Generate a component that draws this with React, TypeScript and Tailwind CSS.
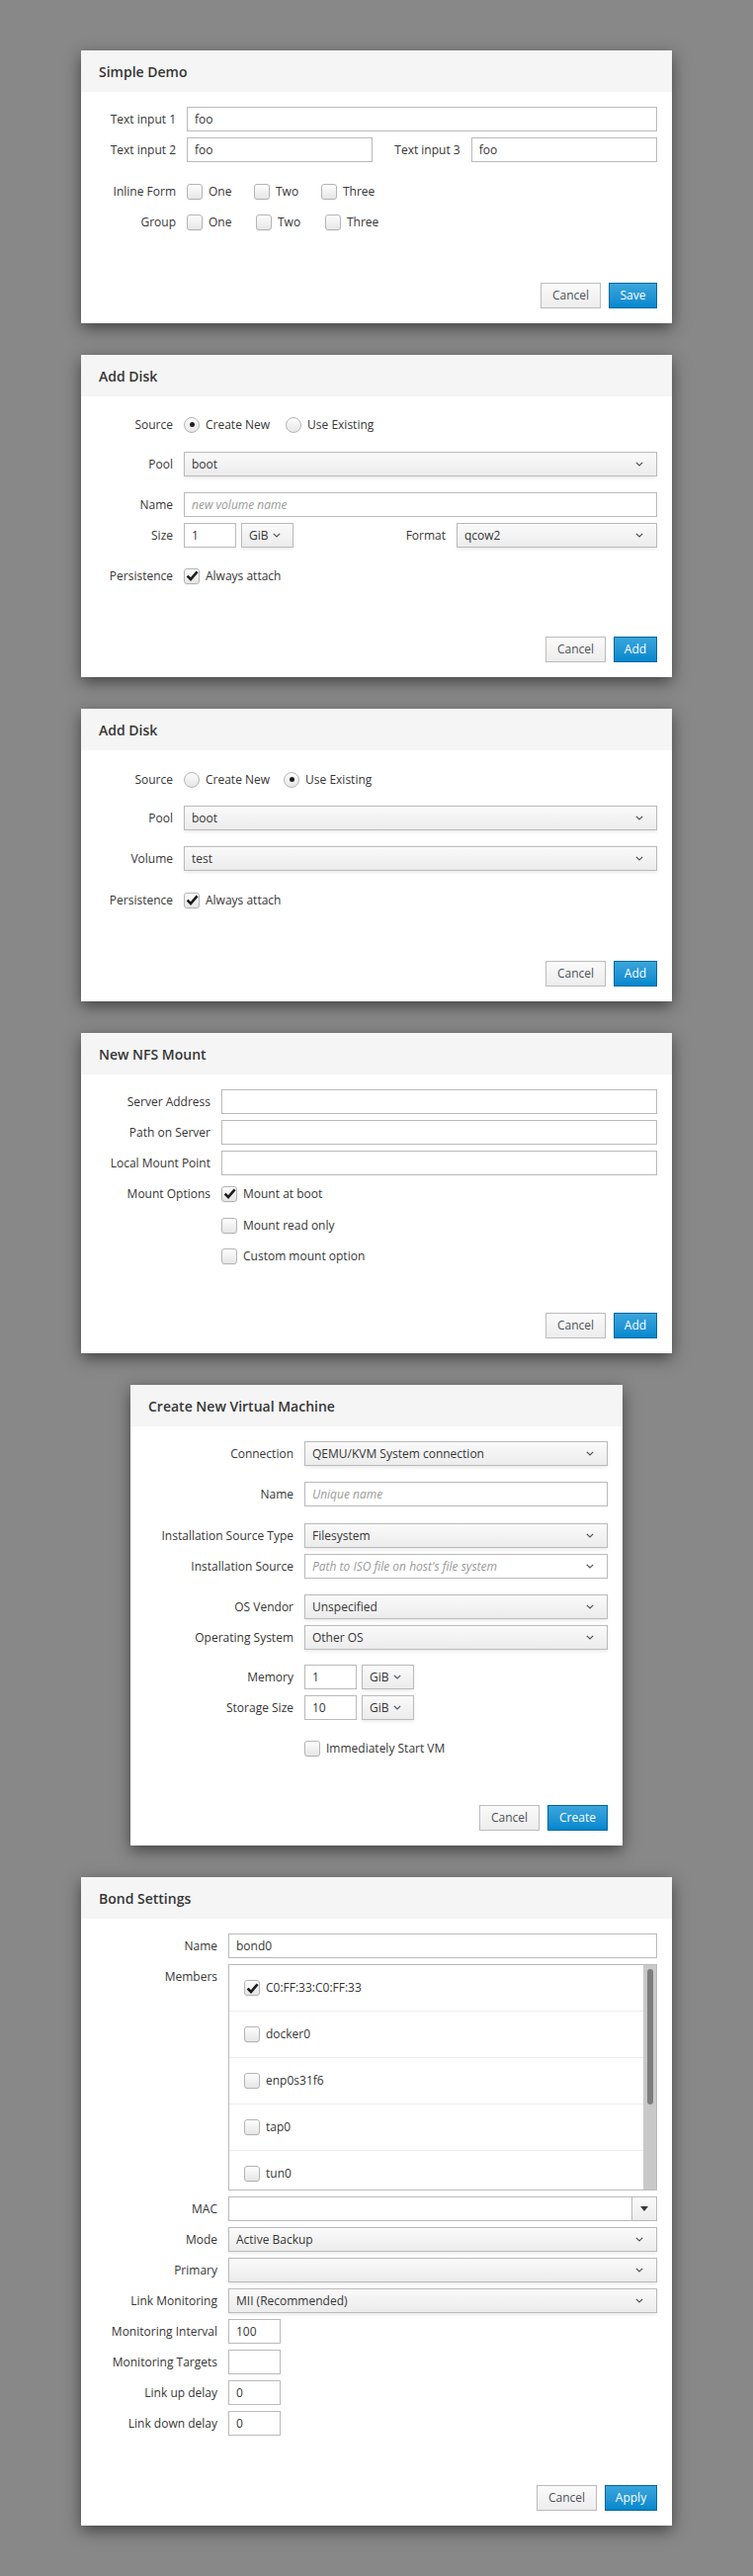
import type { ReactNode } from 'react'
import clsx from 'clsx'

const Chevron = () => (
  <svg width="8" height="5" viewBox="0 0 8 5" className="shrink-0">
    <path d="M0.8 0.8 L4 4 L7.2 0.8" fill="none" stroke="#4d5258" strokeWidth="1.2" />
  </svg>
)

const Checkbox = ({ checked }: { checked?: boolean }) => (
  <span className="flex size-[16px] shrink-0 items-center justify-center rounded-[3px] border border-[#b4b4b4] bg-linear-to-b from-[#fdfdfd] to-[#e6e6e6] shadow-[0_1px_1px_rgba(0,0,0,0.06)]">
    {checked && (
      <svg width="13" height="11" viewBox="0 0 13 11">
        <path d="M1.6 5.6 L5 9 L11.6 1.4" fill="none" stroke="#1e1e1e" strokeWidth="2.6" />
      </svg>
    )}
  </span>
)

const Radio = ({ checked }: { checked?: boolean }) => (
  <span className="flex size-[16px] shrink-0 items-center justify-center rounded-full border border-[#b4b4b4] bg-linear-to-b from-[#fdfdfd] to-[#e6e6e6]">
    {checked && <span className="size-[5px] rounded-full bg-[#1e1e1e]" />}
  </span>
)

const Check = ({ label, checked, className }: { label: string; checked?: boolean; className?: string }) => (
  <div className={clsx('flex items-center gap-[6px]', className)}>
    <Checkbox checked={checked} />
    <span>{label}</span>
  </div>
)

const Input = ({ value, placeholder, className }: { value?: string; placeholder?: string; className?: string }) => (
  <input
    readOnly
    value={value ?? ''}
    placeholder={placeholder}
    className={clsx(
      'h-[25px] min-w-0 border border-[#bababa] bg-white px-[7px] text-[#363636] outline-none placeholder:italic placeholder:text-[#9a9a9a]',
      className,
    )}
  />
)

const Select = ({ value, placeholder, plain, className }: { value?: string; placeholder?: string; plain?: boolean; className?: string }) => (
  <div
    className={clsx(
      'flex h-[25px] items-center justify-between border border-[#bababa] pr-[13px] pl-[7px]',
      plain ? 'bg-white' : 'bg-linear-to-b from-[#fafafa] to-[#ececec] shadow-[0_2px_3px_rgba(3,3,3,0.08)]',
      className,
    )}
  >
    {value ? <span>{value}</span> : <span className="italic text-[#9a9a9a]">{placeholder}</span>}
    <Chevron />
  </div>
)

const Unit = () => (
  <div className="flex h-[25px] w-[53px] items-center gap-[4px] border border-[#bababa] bg-linear-to-b from-[#fafafa] to-[#ececec] pl-[7px] shadow-[0_2px_3px_rgba(3,3,3,0.08)]">
    <span>GiB</span>
    <Chevron />
  </div>
)

const Row = ({ label, labelW, mt, top, children }: { label?: string; labelW: string; mt?: string; top?: boolean; children: ReactNode }) => (
  <div className={clsx('flex', top ? 'items-start' : 'items-center', mt)}>
    <div className={clsx('flex h-[25px] shrink-0 items-center justify-end whitespace-nowrap', labelW)}>{label}</div>
    <div className="ml-[11px] flex min-h-[25px] min-w-0 flex-1 items-center">{children}</div>
  </div>
)

const Button = ({ children, primary, width }: { children: ReactNode; primary?: boolean; width: string }) => (
  <button
    className={clsx(
      'h-[26px] border text-center leading-none',
      width,
      primary
        ? 'border-[#00659c] bg-linear-to-b from-[#39a5dc] to-[#0088ce] text-white'
        : 'border-[#bbbbbb] bg-linear-to-b from-[#fafafa] to-[#ededed] text-[#4d5258]',
    )}
  >
    {children}
  </button>
)

const Modal = ({
  title,
  wide = true,
  children,
  action,
  actionW,
  footerMt,
}: {
  title: string
  wide?: boolean
  children: ReactNode
  action: string
  actionW: string
  footerMt: string
}) => (
  <section className={clsx('bg-white shadow-[0_5px_15px_rgba(0,0,0,0.5)]', wide ? 'w-[598px]' : 'w-[498px]')}>
    <header className="flex h-[42px] items-center bg-[#f5f5f5] pl-[18px] text-[14px] font-semibold text-[#363636]">{title}</header>
    <div className="pt-[15px] pr-[15px] pl-[27px]">{children}</div>
    <footer className={clsx('flex justify-end gap-[8px] pr-[15px] pb-[15px]', footerMt)}>
      <Button width="w-[61px]">Cancel</Button>
      <Button primary width={actionW}>
        {action}
      </Button>
    </footer>
  </section>
)

const members = ['C0:FF:33:C0:FF:33', 'docker0', 'enp0s31f6', 'tap0', 'tun0']

export default function App() {
  return (
    <div className="flex min-h-screen flex-col items-center gap-[32px] bg-[#888888] py-[51px] font-['Open_Sans',sans-serif] text-[12px] text-[#363636]">
      <Modal title="Simple Demo" action="Save" actionW="w-[49px]" footerMt="mt-[49px]">
        <Row label="Text input 1" labelW="w-[69px]">
          <Input value="foo" className="flex-1" />
        </Row>
        <Row label="Text input 2" labelW="w-[69px]" mt="mt-[6px]">
          <Input value="foo" className="flex-1" />
          <span className="mr-[11px] ml-[22px] whitespace-nowrap">Text input 3</span>
          <Input value="foo" className="flex-1" />
        </Row>
        <Row label="Inline Form" labelW="w-[69px]" mt="mt-[17px]">
          <Check label="One" className="w-[68px]" />
          <Check label="Two" className="w-[68px]" />
          <Check label="Three" />
        </Row>
        <Row label="Group" labelW="w-[69px]" mt="mt-[6px]">
          <Check label="One" className="w-[70px]" />
          <Check label="Two" className="w-[70px]" />
          <Check label="Three" />
        </Row>
      </Modal>

      <Modal title="Add Disk" action="Add" actionW="w-[44px]" footerMt="mt-[49px]">
        <Row label="Source" labelW="w-[66px]" mt="mt-[1px]">
          <div className="flex items-center gap-[6px]">
            <Radio checked />
            <span>Create New</span>
          </div>
          <div className="ml-[16px] flex items-center gap-[6px]">
            <Radio />
            <span>Use Existing</span>
          </div>
        </Row>
        <Row label="Pool" labelW="w-[66px]" mt="mt-[15px]">
          <Select value="boot" className="flex-1" />
        </Row>
        <Row label="Name" labelW="w-[66px]" mt="mt-[16px]">
          <Input placeholder="new volume name" className="flex-1" />
        </Row>
        <Row label="Size" labelW="w-[66px]" mt="mt-[6px]">
          <Input value="1" className="w-[53px]" />
          <div className="ml-[5px]">
            <Unit />
          </div>
          <span className="mr-[11px] ml-auto">Format</span>
          <Select value="qcow2" className="w-[203px]" />
        </Row>
        <Row label="Persistence" labelW="w-[66px]" mt="mt-[16px]">
          <Check label="Always attach" checked />
        </Row>
      </Modal>

      <Modal title="Add Disk" action="Add" actionW="w-[44px]" footerMt="mt-[49px]">
        <Row label="Source" labelW="w-[66px]" mt="mt-[2px]">
          <div className="flex items-center gap-[6px]">
            <Radio />
            <span>Create New</span>
          </div>
          <div className="ml-[14px] flex items-center gap-[6px]">
            <Radio checked />
            <span>Use Existing</span>
          </div>
        </Row>
        <Row label="Pool" labelW="w-[66px]" mt="mt-[14px]">
          <Select value="boot" className="flex-1" />
        </Row>
        <Row label="Volume" labelW="w-[66px]" mt="mt-[16px]">
          <Select value="test" className="flex-1" />
        </Row>
        <Row label="Persistence" labelW="w-[66px]" mt="mt-[17px]">
          <Check label="Always attach" checked />
        </Row>
      </Modal>

      <Modal title="New NFS Mount" action="Add" actionW="w-[44px]" footerMt="mt-[45px]">
        <Row label="Server Address" labelW="w-[104px]">
          <Input className="flex-1" />
        </Row>
        <Row label="Path on Server" labelW="w-[104px]" mt="mt-[6px]">
          <Input className="flex-1" />
        </Row>
        <Row label="Local Mount Point" labelW="w-[104px]" mt="mt-[6px]">
          <Input className="flex-1" />
        </Row>
        <Row label="Mount Options" labelW="w-[104px]" mt="mt-[6px]">
          <Check label="Mount at boot" checked />
        </Row>
        <Row labelW="w-[104px]" mt="mt-[7px]">
          <Check label="Mount read only" />
        </Row>
        <Row labelW="w-[104px]" mt="mt-[6px]">
          <Check label="Custom mount option" />
        </Row>
      </Modal>

      <Modal title="Create New Virtual Machine" wide={false} action="Create" actionW="w-[61px]" footerMt="mt-[45px]">
        <Row label="Connection" labelW="w-[138px]">
          <Select value="QEMU/KVM System connection" className="flex-1" />
        </Row>
        <Row label="Name" labelW="w-[138px]" mt="mt-[16px]">
          <Input placeholder="Unique name" className="flex-1" />
        </Row>
        <Row label="Installation Source Type" labelW="w-[138px]" mt="mt-[17px]">
          <Select value="Filesystem" className="flex-1" />
        </Row>
        <Row label="Installation Source" labelW="w-[138px]" mt="mt-[6px]">
          <Select placeholder="Path to ISO file on host's file system" plain className="flex-1" />
        </Row>
        <Row label="OS Vendor" labelW="w-[138px]" mt="mt-[16px]">
          <Select value="Unspecified" className="flex-1" />
        </Row>
        <Row label="Operating System" labelW="w-[138px]" mt="mt-[6px]">
          <Select value="Other OS" className="flex-1" />
        </Row>
        <Row label="Memory" labelW="w-[138px]" mt="mt-[15px]">
          <Input value="1" className="w-[53px]" />
          <div className="ml-[5px]">
            <Unit />
          </div>
        </Row>
        <Row label="Storage Size" labelW="w-[138px]" mt="mt-[6px]">
          <Input value="10" className="w-[53px]" />
          <div className="ml-[5px]">
            <Unit />
          </div>
        </Row>
        <Row labelW="w-[138px]" mt="mt-[16px]">
          <Check label="Immediately Start VM" />
        </Row>
      </Modal>

      <Modal title="Bond Settings" action="Apply" actionW="w-[53px]" footerMt="mt-[50px]">
        <Row label="Name" labelW="w-[111px]">
          <Input value="bond0" className="flex-1" />
        </Row>
        <Row label="Members" labelW="w-[111px]" mt="mt-[6px]" top>
          <div className="flex h-[229px] flex-1 overflow-hidden border border-[#bababa]">
            <ul className="flex-1">
              {members.map((m, i) => (
                <li key={m} className="flex h-[47px] shrink-0 items-center gap-[6px] border-b border-[#ededed] pl-[15px]">
                  <Checkbox checked={i === 0} />
                  <span>{m}</span>
                </li>
              ))}
            </ul>
            <div className="flex w-[13px] justify-center bg-[#c9c9c9] pt-[4px]">
              <div className="h-[137px] w-[6px] rounded-full bg-[#7d7d7d]" />
            </div>
          </div>
        </Row>
        <Row label="MAC" labelW="w-[111px]" mt="mt-[6px]">
          <div className="flex h-[25px] flex-1 border border-[#bababa] bg-white">
            <div className="flex-1" />
            <div className="flex w-[25px] items-center justify-center border-l border-[#bababa] bg-linear-to-b from-[#fafafa] to-[#ececec]">
              <svg width="8" height="5" viewBox="0 0 8 5">
                <path d="M0 0 H8 L4 5 Z" fill="#363636" />
              </svg>
            </div>
          </div>
        </Row>
        <Row label="Mode" labelW="w-[111px]" mt="mt-[6px]">
          <Select value="Active Backup" className="flex-1" />
        </Row>
        <Row label="Primary" labelW="w-[111px]" mt="mt-[6px]">
          <Select value=" " className="flex-1" />
        </Row>
        <Row label="Link Monitoring" labelW="w-[111px]" mt="mt-[6px]">
          <Select value="MII (Recommended)" className="flex-1" />
        </Row>
        <Row label="Monitoring Interval" labelW="w-[111px]" mt="mt-[6px]">
          <Input value="100" className="w-[53px]" />
        </Row>
        <Row label="Monitoring Targets" labelW="w-[111px]" mt="mt-[6px]">
          <Input className="w-[53px]" />
        </Row>
        <Row label="Link up delay" labelW="w-[111px]" mt="mt-[6px]">
          <Input value="0" className="w-[53px]" />
        </Row>
        <Row label="Link down delay" labelW="w-[111px]" mt="mt-[6px]">
          <Input value="0" className="w-[53px]" />
        </Row>
      </Modal>
    </div>
  )
}
